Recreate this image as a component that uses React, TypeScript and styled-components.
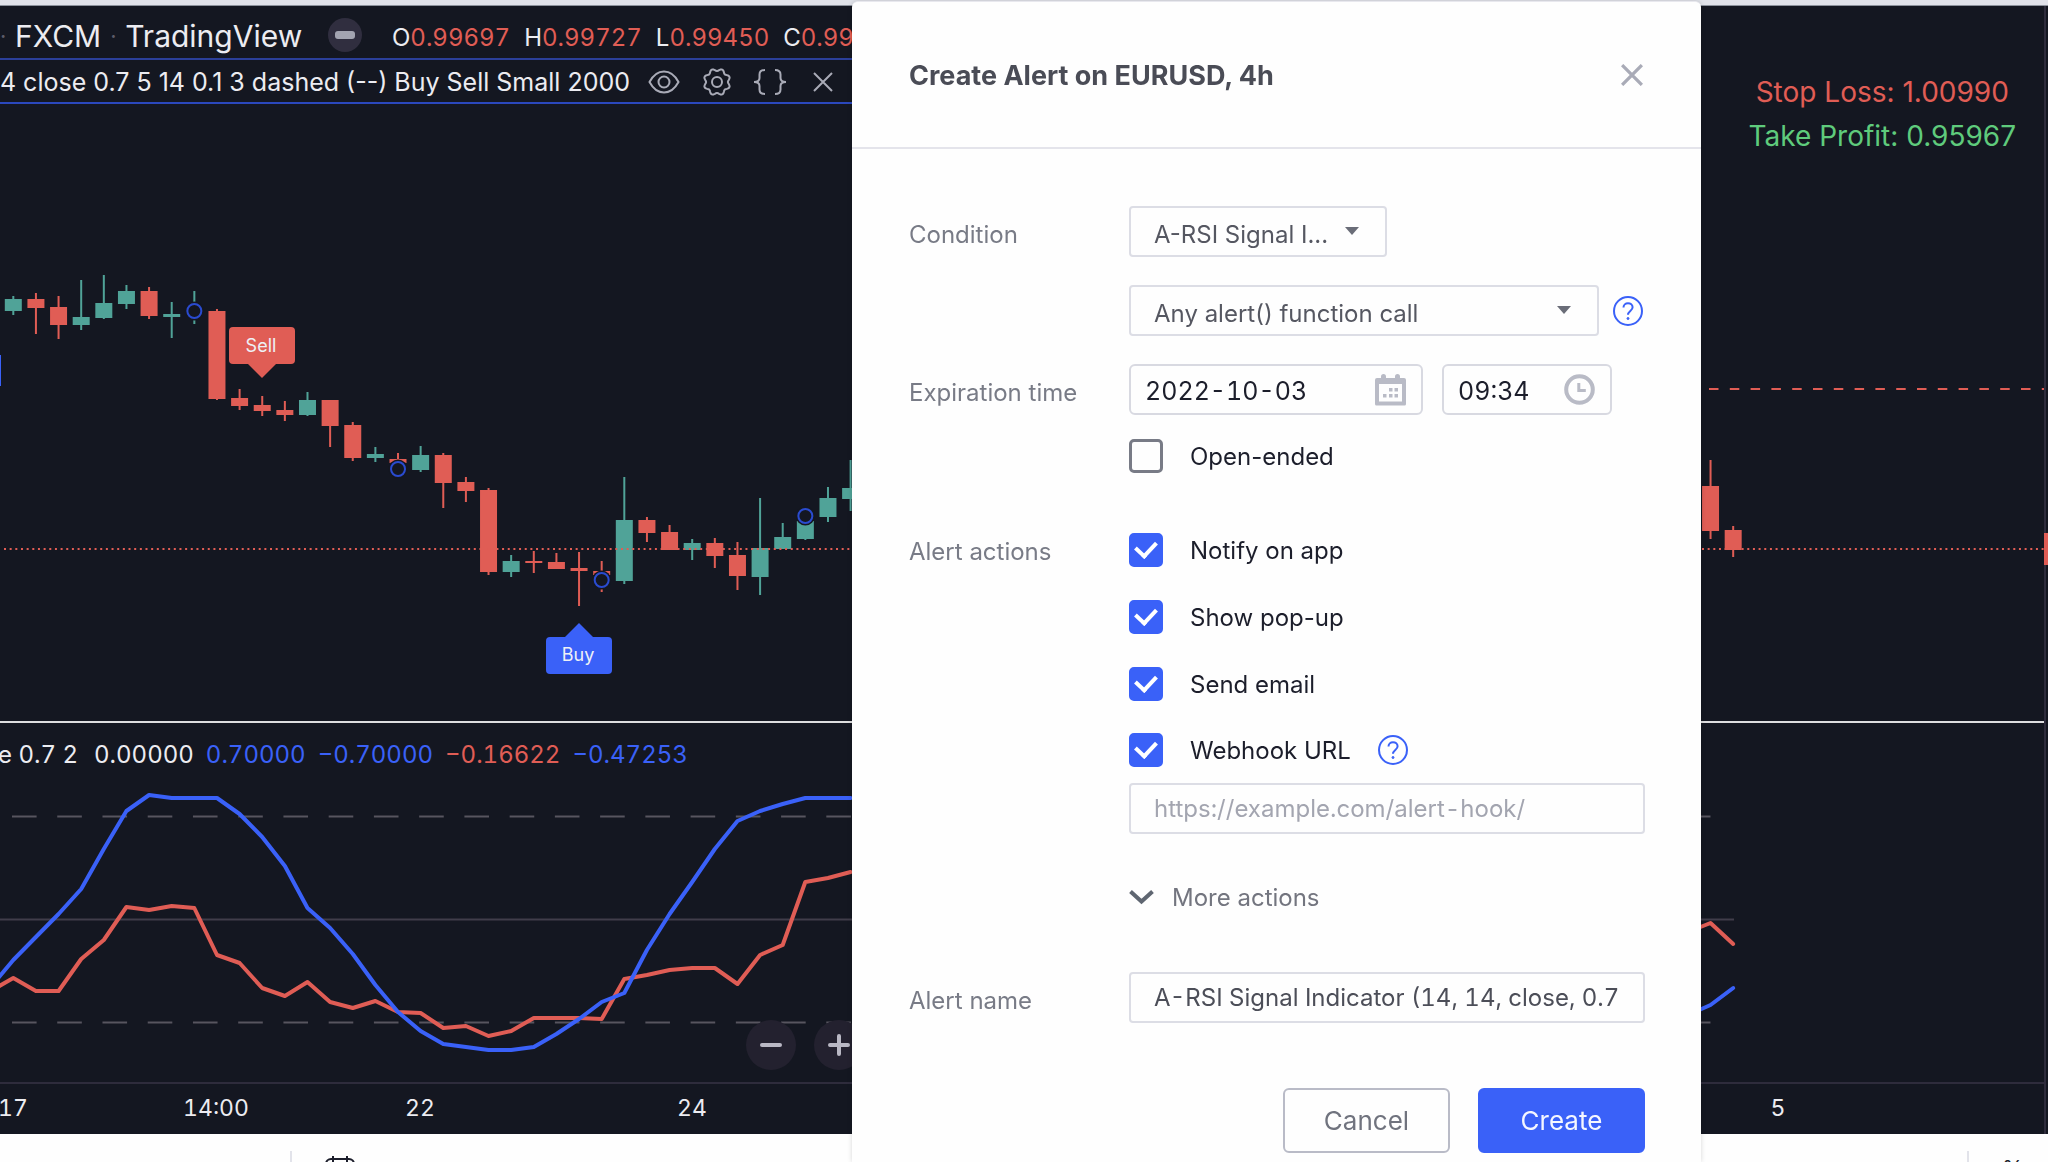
import React, { useState } from 'react';
import styled, { createGlobalStyle } from 'styled-components';

const color = {
  bg: '#141721',
  red: '#e05d55',
  green: '#50a398',
  blue: '#3a61f8',
  profit: '#5fcb7c',
  grid: '#2e2c3c',
  text: '#ececf1',
  muted: '#787b86',
  ink: '#1c1e2b',
  border: '#dcdde5',
};

const GlobalStyle = createGlobalStyle`
  * { box-sizing: border-box; }
  body {
    margin: 0;
    background: #fefefe;
    font-family: Inter, Roboto, "Liberation Sans", sans-serif;
    overflow: hidden;
  }
  button, input, select { font-family: inherit; }
`;

/* ---------- page ---------- */

const Page = styled.div`
  display: flex;
  flex-direction: column;
  height: 100vh;
  overflow: hidden;
  background: ${color.bg};
  color: ${color.text};
`;

const TopStrip = styled.div`
  flex: none;
  height: 6px;
  background: #e0e2e9;
  border-bottom: 1px solid #8c929c;
`;

const ChartArea = styled.main`
  flex: 1;
  min-height: 0;
  display: flex;
  overflow: hidden;
`;

const Panes = styled.div`
  flex: 1;
  min-width: 0;
  display: flex;
  flex-direction: column;
`;

const PriceScale = styled.aside`
  flex: none;
  width: 4px;
  border-left: 2px solid ${color.grid};
  padding-top: 527px;
`;

const PriceTag = styled.div`
  height: 32px;
  margin-left: -2px;
  background: ${color.red};
`;

const PricePane = styled.section`
  flex: 1;
  min-height: 0;
  position: relative;
  overflow: hidden;
`;

const IndicatorPane = styled.section`
  flex: none;
  height: 361px;
  position: relative;
  overflow: hidden;
  border-top: 2px solid #dededf;
`;

const Canvas = styled.svg`
  display: block;
  width: 100%;
  height: 100%;
`;

const TimeAxis = styled.div`
  flex: none;
  height: 52px;
  border-top: 2px solid ${color.grid};
  font-variant-numeric: tabular-nums;
`;

const Legend = styled.div`
  position: absolute;
  top: 0;
  left: 0;
  width: 860px;
`;

const SymbolRow = styled.div`
  display: flex;
  align-items: center;
  height: 54px;
  padding-top: 6px;
  border-bottom: 2px solid #2b3f9a;
  white-space: nowrap;
`;

const SymbolName = styled.div`
  flex: none;
  display: flex;
  gap: 9px;
  width: 328px;
  padding-top: 2px;
  font-size: 30px;
  line-height: 40px;
`;

const Dot = styled.span`
  width: 6px;
  color: #5d5c69;
  font-size: 22px;
`;

const StatusPill = styled.button`
  flex: none;
  display: grid;
  place-items: center;
  width: 34px;
  height: 34px;
  padding: 0;
  margin-right: 30px;
  border: 0;
  border-radius: 50%;
  background: #302e3f;
  &::before {
    content: '';
    width: 20px;
    height: 8px;
    border-radius: 3px;
    background: #a3a4b1;
  }
`;

const Ohlc = styled.div`
  display: flex;
  gap: 14px;
  padding-top: 6px;
  font-size: 24px;
  line-height: 32px;
  font-variant-numeric: tabular-nums;
`;

const Value = styled.span<{ $tone?: string }>`
  color: ${(p) => p.$tone ?? color.text};
`;

const StudyRow = styled.div`
  display: flex;
  align-items: center;
  justify-content: flex-end;
  gap: 16px;
  width: 840px;
  height: 42px;
  padding-top: 2px;
  overflow: hidden;
  font-size: 25px;
  line-height: 32px;
  white-space: nowrap;
`;

const StudyUnderline = styled.div`
  height: 2px;
  background: #2b48bd;
`;

const StudyTools = styled.div`
  display: flex;
  gap: 18px;
`;

const IconButton = styled.button`
  display: grid;
  place-items: center;
  width: 35px;
  height: 32px;
  padding: 0;
  border: 0;
  background: none;
  color: #a9abb7;
`;

const Levels = styled.div`
  position: absolute;
  top: 64px;
  right: 28px;
  text-align: center;
  font-size: 28px;
  line-height: 44px;
`;

const Level = styled.div<{ $tone: string }>`
  color: ${(p) => p.$tone};
`;

const IndicatorLegend = styled.div`
  position: absolute;
  top: 16px;
  left: 0;
  display: flex;
  align-items: center;
  gap: 12px;
  width: 760px;
  font-size: 24px;
  line-height: 32px;
  white-space: nowrap;
  font-variant-numeric: tabular-nums;
`;

const IndicatorTitle = styled.div`
  flex: none;
  display: flex;
  justify-content: flex-end;
  width: 78px;
  margin-right: 4px;
`;

const ZoomControls = styled.div`
  position: absolute;
  left: 746px;
  bottom: 12px;
  display: flex;
  gap: 18px;
`;

const ZoomButton = styled.button`
  display: grid;
  place-items: center;
  width: 50px;
  height: 50px;
  padding: 0;
  border: 0;
  border-radius: 50%;
  background: #23212f;
  color: #b9b8c4;
`;

const BottomBar = styled.footer`
  flex: none;
  display: flex;
  justify-content: space-between;
  height: 28px;
  padding-top: 17px;
  overflow: hidden;
  background: #fefefe;
  color: ${color.ink};
`;

const BarGroup = styled.div<{ $indent?: number }>`
  display: flex;
  gap: 33px;
  height: 40px;
  padding-left: ${(p) => p.$indent ?? 0}px;
`;

const Divider = styled.div`
  width: 2px;
  background: #e2e3ea;
`;

const BarButton = styled.button`
  display: flex;
  align-items: flex-start;
  width: 46px;
  padding: 5px 0 0;
  border: 0;
  background: none;
  color: inherit;
  font-size: 22px;
  line-height: 24px;
`;

/* ---------- dialog ---------- */

const DialogLayer = styled.div`
  position: fixed;
  inset: 0;
  display: flex;
  justify-content: flex-end;
  padding: 1px 347px 0 0;
`;

const Dialog = styled.form`
  width: 849px;
  min-height: 100%;
  border-radius: 6px 6px 0 0;
  border-top: 1px solid #e8e8ee;
  background: #fefefe;
  box-shadow: 0 0 5px rgba(0, 0, 0, 0.16);
`;

const DialogHeader = styled.header`
  display: flex;
  align-items: center;
  justify-content: space-between;
  height: 147px;
  padding: 0 52px 0 57px;
  border-bottom: 2px solid #e4e4eb;
`;

const Title = styled.h1`
  margin: 0;
  padding-top: 2px;
  color: #4a4c56;
  font-size: 27px;
  line-height: 36px;
  font-weight: 700;
`;

const DialogBody = styled.div`
  display: flex;
  flex-direction: column;
  padding: 57px 56px 0 57px;
`;

const FieldRow = styled.div<{ $before?: number }>`
  display: grid;
  grid-template-columns: 220px minmax(0, 1fr);
  align-items: start;
  margin-top: ${(p) => p.$before ?? 0}px;
`;

const FieldLabel = styled.label<{ $compact?: boolean }>`
  padding-top: ${(p) => (p.$compact ? 2 : 3)}px;
  color: ${color.muted};
  font-size: 24px;
  line-height: ${(p) => (p.$compact ? 34 : 51)}px;
`;

const Stack = styled.div<{ $gap: number }>`
  display: flex;
  flex-direction: column;
  align-items: flex-start;
  gap: ${(p) => p.$gap}px;
`;

const Line = styled.div<{ $gap: number }>`
  display: flex;
  align-items: center;
  gap: ${(p) => p.$gap}px;
`;

const Control = styled.div<{ $width: number }>`
  position: relative;
  width: ${(p) => p.$width}px;
`;

const Select = styled.select`
  display: block;
  appearance: none;
  width: 100%;
  height: 51px;
  padding: 5px 48px 0 23px;
  border: 2px solid ${color.border};
  border-radius: 4px;
  background: transparent;
  color: #555761;
  font-size: 24px;
`;

const Caret = styled.span<{ $right: number }>`
  position: absolute;
  top: 21px;
  right: ${(p) => p.$right}px;
  border: 7px solid transparent;
  border-top: 8px solid #6a6d78;
  border-bottom: 0;
  pointer-events: none;
`;

const PickerInput = styled.input`
  display: block;
  width: 100%;
  height: 51px;
  padding: 2px 50px 0 14px;
  border: 2px solid #d8d9e1;
  border-radius: 6px;
  background: transparent;
  color: ${color.ink};
  font-size: 25px;
  font-variant-numeric: tabular-nums;
`;

const PickerIcon = styled.svg`
  position: absolute;
  top: 10px;
  right: 17px;
  pointer-events: none;
`;

const TextInput = styled.input`
  display: block;
  width: 100%;
  height: 51px;
  padding: 0 23px;
  border: 2px solid ${color.border};
  border-radius: 4px;
  background: transparent;
  color: #4c4e58;
  font-size: 24px;
  font-variant-numeric: tabular-nums;
  &::placeholder {
    color: #a3a5b0;
    opacity: 1;
  }
`;

const CheckLabel = styled.label`
  display: flex;
  align-items: center;
  gap: 27px;
  color: ${color.ink};
  font-size: 24px;
  line-height: 32px;
`;

const CheckText = styled.span`
  padding-top: 2px;
`;

const CheckInput = styled.input`
  appearance: none;
  flex: none;
  display: grid;
  place-items: center;
  width: 34px;
  height: 34px;
  margin: 0;
  border: 3px solid #787b86;
  border-radius: 5px;
  &:checked {
    border-color: ${color.blue};
    background: ${color.blue};
  }
  &:checked::before {
    content: '';
    width: 10px;
    height: 16px;
    margin-top: -7px;
    border: solid #fff;
    border-width: 0 4px 4px 0;
    transform: rotate(43deg);
  }
`;

const HelpButton = styled.button`
  display: grid;
  place-items: center;
  width: 32px;
  height: 32px;
  padding: 0;
  border: 0;
  background: none;
  color: ${color.blue};
`;

const MoreButton = styled.button`
  display: flex;
  align-items: center;
  gap: 18px;
  height: 34px;
  padding: 0;
  border: 0;
  background: none;
  color: #73757f;
  font-size: 24px;
`;

const Actions = styled.footer`
  display: flex;
  justify-content: flex-end;
  gap: 28px;
  margin-top: 62px;
`;

const ActionButton = styled.button<{ $primary?: boolean }>`
  width: 167px;
  height: 65px;
  border: 2px solid ${(p) => (p.$primary ? color.blue : '#b9bbc7')};
  border-radius: 6px;
  background: ${(p) => (p.$primary ? color.blue : '#fefefe')};
  color: ${(p) => (p.$primary ? '#f4f6ff' : '#70737e')};
  font-size: 26px;
`;

/* ---------- chart data ---------- */

const FIRST_BAR = 13.3;
const BAR_STEP = 22.63;
const barX = (i: number) => FIRST_BAR + BAR_STEP * i;

// [index, rising, high, low, body top, body bottom]
type Candle = [number, 0 | 1, number, number, number, number];

const candles: Candle[] = [
  [0, 1, 296, 315, 299, 311], [1, 0, 293, 334, 299, 308], [2, 0, 296, 339, 307, 325],
  [3, 1, 280, 330, 317, 325], [4, 1, 275, 319, 303, 318], [5, 1, 285, 309, 291, 304],
  [6, 0, 287, 319, 291, 316], [7, 1, 302, 338, 314, 317], [8, 1, 291, 324, 311, 312],
  [9, 0, 309, 400, 311, 399], [10, 0, 389, 410, 398, 406], [11, 0, 396, 416, 405, 411],
  [12, 0, 401, 421, 410, 415], [13, 1, 392, 416, 400, 415], [14, 0, 400, 447, 400, 426],
  [15, 0, 422, 461, 425, 458], [16, 1, 447, 462, 454, 458], [17, 0, 453, 464, 459, 463],
  [18, 1, 446, 472, 455, 470], [19, 0, 453, 508, 455, 483], [20, 0, 477, 502, 482, 491],
  [21, 0, 488, 575, 490, 572], [22, 1, 555, 577, 561, 572], [23, 0, 551, 573, 561, 563],
  [24, 0, 553, 569, 562, 569], [25, 0, 552, 606, 568, 571], [26, 0, 561, 592, 571, 575],
  [27, 1, 477, 584, 520, 581], [28, 0, 517, 542, 520, 533], [29, 0, 525, 550, 532, 550],
  [30, 1, 539, 560, 543, 550], [31, 0, 538, 568, 543, 556], [32, 0, 542, 590, 555, 576],
  [33, 1, 498, 595, 548, 577], [34, 1, 523, 549, 537, 549], [35, 1, 521, 540, 521, 539],
  [36, 1, 487, 522, 498, 517], [37, 1, 460, 511, 488, 499],
  [75, 0, 460, 539, 486, 531], [76, 0, 526, 557, 530, 550],
];

const markers: [number, number][] = [[8, 311], [17, 469], [26, 580], [35, 516]];

const slowLine = [
  987, 960, 937, 914, 889, 849, 811, 795, 798, 798, 798, 814, 837, 866, 908, 928, 954, 985, 1012,
  1031, 1044, 1047, 1050, 1050, 1047, 1034, 1019, 1002, 993, 950, 914, 882, 849, 821, 811, 804, 798,
  798, 798,
];
const fastLine = [
  991, 978, 991, 991, 959, 940, 907, 910, 906, 908, 955, 963, 988, 996, 982, 1002, 1008, 1001, 1012,
  1013, 1028, 1026, 1036, 1031, 1018, 1018, 1018, 1019, 979, 975, 970, 968, 968, 984, 955, 945, 882,
  878, 872,
];

const toPoints = (start: number, ys: number[]) =>
  ys.map((y, k) => `${barX(start + k).toFixed(1)},${y}`).join(' ');

const gearPath = (() => {
  const pts: string[] = [];
  for (let a = 0; a < 360; a += 5) {
    const t = (a * Math.PI) / 180;
    const r = 12.2 + 1.3 * Math.cos(8 * t + Math.PI);
    pts.push(`${(16 + r * Math.cos(t)).toFixed(2)} ${(16 + r * Math.sin(t)).toFixed(2)}`);
  }
  return `M${pts.join('L')}Z`;
})();

/* ---------- icons ---------- */

const EyeIcon = () => (
  <svg width="34" height="28" viewBox="0 0 34 28" fill="none" stroke="currentColor" strokeWidth="2">
    <path d="M2.500 14C6 7.500 11 3.500 17 3.500S28 7.500 31.500 14C28 20.500 23 24.500 17 24.500S6 20.500 2.500 14Z" />
    <circle cx="17" cy="14" r="5.500" />
  </svg>
);

const GearIcon = () => (
  <svg width="32" height="32" viewBox="0 0 32 32" fill="none" stroke="currentColor" strokeWidth="2" strokeLinejoin="round">
    <path d={gearPath} />
    <circle cx="16" cy="16" r="5" />
  </svg>
);

const BracesIcon = () => (
  <svg width="36" height="28" viewBox="0 0 36 28" fill="none" stroke="currentColor" strokeWidth="2">
    <path d="M13 2C9 2 7.500 3.500 7.500 6.500v3.500c0 2.500-1.500 4-5.500 4 4 0 5.500 1.500 5.500 4v3.500c0 3 1.500 4.500 5.500 4.500" />
    <path d="M23 2c4 0 5.500 1.500 5.500 4.500v3.500c0 2.500 1.500 4 5.500 4-4 0-5.500 1.500-5.500 4v3.500c0 3-1.500 4.500-5.500 4.500" />
  </svg>
);

const CrossIcon = ({ size, weight }: { size: number; weight: number }) => (
  <svg width={size} height={size} viewBox="0 0 20 20" fill="none" stroke="currentColor" strokeWidth={weight}>
    <path d="M1 1L19 19M19 1L1 19" />
  </svg>
);

const HelpIcon = () => (
  <svg width="32" height="32" viewBox="0 0 32 32" fill="none" stroke="currentColor" strokeWidth="2">
    <circle cx="16" cy="16" r="14" />
    <path d="M11.500 12.500c0-2.600 2-4.300 4.500-4.300s4.600 1.600 4.600 4c0 3.600-4.600 3.900-4.600 7.600" />
    <circle cx="16" cy="23.500" r="1" fill="currentColor" strokeWidth="1" />
  </svg>
);

const Help = ({ label }: { label: string }) => (
  <HelpButton type="button" aria-label={label}>
    <HelpIcon />
  </HelpButton>
);

const CalendarIcon = () => (
  <PickerIcon width="31" height="32" viewBox="0 0 31 32" fill="#b9bbc6">
    <path fillRule="evenodd" d="M2 4h4V2.500a2.500 2.500 0 0 1 5 0V4h9V2.500a2.500 2.500 0 0 1 5 0V4h4a2 2 0 0 1 2 2v24a1.500 1.500 0 0 1-1.500 1.500h-28A1.500 1.500 0 0 1 0 30V6a2 2 0 0 1 2-2ZM4 10v17.500h23V10Z" />
    <path d="M14 14h3.500v3.500H14zM19.500 14H23v3.500h-3.500zM8 20h3.500v3.500H8zM14 20h3.500v3.500H14zM19.500 20H23v3.500h-3.500z" />
  </PickerIcon>
);

const ClockIcon = () => (
  <PickerIcon width="31" height="31" viewBox="0 0 31 31" fill="none" stroke="#b9bbc6">
    <circle cx="15.500" cy="15.500" r="13.300" strokeWidth="4" />
    <path d="M14.800 9v7.500h7" strokeWidth="3" />
  </PickerIcon>
);

/* ---------- sections ---------- */

const Callout = ({ x, top, tip, base, fill, text, down }: {
  x: number; top: number; tip: number; base: number; fill: string; text: string; down?: boolean;
}) => (
  <g fill={fill}>
    <rect x={x - 33} y={top} width="66" height="37" rx="4" />
    <path d={`M${x - 15} ${base}L${x} ${tip}L${x + 15} ${base}Z`} />
    <text x={x - 1} y={down ? top + 25 : top + 24} fill="#eef0f6" fontSize="18" textAnchor="middle">
      {text}
    </text>
  </g>
);

const PriceChart = () => (
  <Canvas role="img" aria-label="EURUSD candles">
    <g transform="translate(0 -6)">
      <rect x="0" y="355" width="1" height="31" fill={color.blue} />
      {candles.map(([i, up, high, low, top, bottom]) => (
        <g key={i} fill={up ? color.green : color.red}>
          <rect x={barX(i) - 1} y={high} width="2" height={low - high} />
          <rect x={barX(i) - 8.5} y={top} width="17" height={bottom - top} />
        </g>
      ))}
      {markers.map(([i, y]) => (
        <g key={i}>
          <circle cx={barX(i)} cy={y} r="9.500" fill={color.bg} />
          <circle cx={barX(i)} cy={y} r="7" fill="none" stroke="#2a4bd0" strokeWidth="2" />
        </g>
      ))}
      <line x1="4" y1="549" x2="100%" y2="549" stroke={color.red} strokeWidth="2" strokeDasharray="2 3.660" />
      <line x1="1709" y1="389" x2="100%" y2="389" stroke={color.red} strokeWidth="2" strokeDasharray="9.500 11.300" />
      <Callout x={262} top={327} base={363} tip={378} fill={color.red} text="Sell" down />
      <Callout x={579} top={637} base={638} tip={623} fill={color.blue} text="Buy" />
    </g>
  </Canvas>
);

const IndicatorChart = () => (
  <Canvas role="img" aria-label="Oscillator">
    <g transform="translate(0 -723)" fill="none">
      <line x1="12" y1="816.500" x2="1712" y2="816.500" stroke="#57555f" strokeWidth="2" strokeDasharray="24.600 20.640" />
      <line x1="0" y1="919.500" x2="1734" y2="919.500" stroke="#403d4a" strokeWidth="2" />
      <line x1="12" y1="1022.500" x2="1712" y2="1022.500" stroke="#57555f" strokeWidth="2" strokeDasharray="24.600 20.640" />
      <g strokeWidth="4" strokeLinejoin="round" strokeLinecap="round">
        <polyline stroke={color.red} points={toPoints(-1, fastLine)} />
        <polyline stroke={color.blue} points={toPoints(-1, slowLine)} />
        <polyline stroke={color.red} points={toPoints(74, [932, 923, 944])} />
        <polyline stroke={color.blue} points={toPoints(74, [1015, 1005, 988])} />
      </g>
    </g>
  </Canvas>
);

const ohlc = [['O', '0.99697'], ['H', '0.99727'], ['L', '0.99450'], ['C', '0.99']];

const times: [number, string][] = [[13, '17'], [216, '14:00'], [420, '22'], [692, '24'], [1778, '5']];

const ChartLegend = () => (
  <Legend>
    <SymbolRow>
      <SymbolName>
        <Dot>·</Dot>
        <span>FXCM</span>
        <Dot>·</Dot>
        <span>TradingView</span>
      </SymbolName>
      <StatusPill type="button" aria-label="Market status" />
      <Ohlc>
        {ohlc.map(([key, value]) => (
          <span key={key}>
            {key}
            <Value $tone={color.red}>{value}</Value>
          </span>
        ))}
      </Ohlc>
    </SymbolRow>
    <StudyRow>
      <span>14 close 0.7 5 14 0.1 3 dashed (--) Buy Sell Small 2000</span>
      <StudyTools>
        <IconButton type="button" aria-label="Hide"><EyeIcon /></IconButton>
        <IconButton type="button" aria-label="Settings"><GearIcon /></IconButton>
        <IconButton type="button" aria-label="Source code"><BracesIcon /></IconButton>
        <IconButton type="button" aria-label="Remove"><CrossIcon size={20} weight={2} /></IconButton>
      </StudyTools>
    </StudyRow>
    <StudyUnderline />
  </Legend>
);

const Check = ({ label, initial }: { label: string; initial: boolean }) => {
  const [on, setOn] = useState(initial);
  return (
    <CheckLabel>
      <CheckInput type="checkbox" checked={on} onChange={(e) => setOn(e.target.checked)} />
      <CheckText>{label}</CheckText>
    </CheckLabel>
  );
};

const AlertDialog = () => (
  <DialogLayer>
    <Dialog role="dialog" aria-labelledby="alert-title" onSubmit={(e) => e.preventDefault()}>
      <DialogHeader>
        <Title id="alert-title">Create Alert on EURUSD, 4h</Title>
        <IconButton type="button" aria-label="Close">
          <CrossIcon size={22} weight={3} />
        </IconButton>
      </DialogHeader>
      <DialogBody>
        <FieldRow>
          <FieldLabel htmlFor="condition">Condition</FieldLabel>
          <Stack $gap={28}>
            <Control $width={258}>
              <Select id="condition">
                <option>A-RSI Signal I...</option>
              </Select>
              <Caret $right={28} />
            </Control>
            <Line $gap={13}>
              <Control $width={470}>
                <Select aria-label="Trigger">
                  <option>Any alert() function call</option>
                </Select>
                <Caret $right={28} />
              </Control>
              <Help label="About triggers" />
            </Line>
          </Stack>
        </FieldRow>
        <FieldRow $before={28}>
          <FieldLabel htmlFor="expiration">Expiration time</FieldLabel>
          <Stack $gap={24}>
            <Line $gap={19}>
              <Control $width={294}>
                <PickerInput id="expiration" defaultValue="2022-10-03" />
                <CalendarIcon />
              </Control>
              <Control $width={170}>
                <PickerInput aria-label="Expiration hour" defaultValue="09:34" />
                <ClockIcon />
              </Control>
            </Line>
            <Check label="Open-ended" initial={false} />
          </Stack>
        </FieldRow>
        <FieldRow $before={60}>
          <FieldLabel as="span" $compact>Alert actions</FieldLabel>
          <Stack $gap={33}>
            <Check label="Notify on app" initial />
            <Check label="Show pop-up" initial />
            <Check label="Send email" initial />
          </Stack>
        </FieldRow>
        <FieldRow $before={32}>
          <span />
          <Stack $gap={16}>
            <Line $gap={26}>
              <Check label="Webhook URL" initial />
              <Help label="About webhooks" />
            </Line>
            <TextInput aria-label="Webhook address" placeholder="https://example.com/alert-hook/" />
          </Stack>
        </FieldRow>
        <FieldRow $before={46}>
          <span />
          <MoreButton type="button">
            <svg width="25" height="16" viewBox="0 0 25 16" fill="none" stroke="#5f6671" strokeWidth="4">
              <path d="M1.500 2.500L12.500 12.500L23.500 2.500" />
            </svg>
            More actions
          </MoreButton>
        </FieldRow>
        <FieldRow $before={58}>
          <FieldLabel htmlFor="alert-name">Alert name</FieldLabel>
          <TextInput id="alert-name" defaultValue="A-RSI Signal Indicator (14, 14, close, 0.7, 5)" />
        </FieldRow>
        <Actions>
          <ActionButton type="button">Cancel</ActionButton>
          <ActionButton type="submit" $primary>Create</ActionButton>
        </Actions>
      </DialogBody>
    </Dialog>
  </DialogLayer>
);

export default function App() {
  return (
    <>
      <GlobalStyle />
      <Page>
        <TopStrip />
        <ChartArea>
          <Panes>
            <PricePane>
              <PriceChart />
              <ChartLegend />
              <Levels>
                <Level $tone={color.red}>Stop Loss: 1.00990</Level>
                <Level $tone={color.profit}>Take Profit: 0.95967</Level>
              </Levels>
            </PricePane>
            <IndicatorPane>
              <IndicatorChart />
              <IndicatorLegend>
                <IndicatorTitle>e 0.7 2</IndicatorTitle>
                <Value>0.00000</Value>
                <Value $tone={color.blue}>0.70000</Value>
                <Value $tone={color.blue}>−0.70000</Value>
                <Value $tone={color.red}>−0.16622</Value>
                <Value $tone={color.blue}>−0.47253</Value>
              </IndicatorLegend>
              <ZoomControls>
                <ZoomButton type="button" aria-label="Zoom out">
                  <svg width="24" height="24" stroke="currentColor" strokeWidth="4" strokeLinecap="round">
                    <path d="M3 12h18" />
                  </svg>
                </ZoomButton>
                <ZoomButton type="button" aria-label="Zoom in">
                  <svg width="24" height="24" stroke="currentColor" strokeWidth="4" strokeLinecap="round">
                    <path d="M3 12h18M12 3v18" />
                  </svg>
                </ZoomButton>
              </ZoomControls>
            </IndicatorPane>
            <TimeAxis>
              <Canvas role="img" aria-label="Time axis">
                {times.map(([x, label]) => (
                  <text key={label} x={x} y="32" fill={color.text} fontSize="23" textAnchor="middle">
                    {label}
                  </text>
                ))}
              </Canvas>
            </TimeAxis>
          </Panes>
          <PriceScale>
            <PriceTag />
          </PriceScale>
        </ChartArea>
        <BottomBar>
          <BarGroup $indent={290}>
            <Divider />
            <BarButton type="button" aria-label="Go to date">
              <svg width="30" height="30" viewBox="0 0 30 30" fill="none" stroke="currentColor" strokeWidth="2">
                <rect x="1" y="3" width="28" height="26" rx="5" />
                <path d="M8 0v6M22 0v6M1 11h28" />
              </svg>
            </BarButton>
          </BarGroup>
          <BarGroup>
            <Divider />
            <BarButton type="button">%</BarButton>
          </BarGroup>
        </BottomBar>
      </Page>
      <AlertDialog />
    </>
  );
}
